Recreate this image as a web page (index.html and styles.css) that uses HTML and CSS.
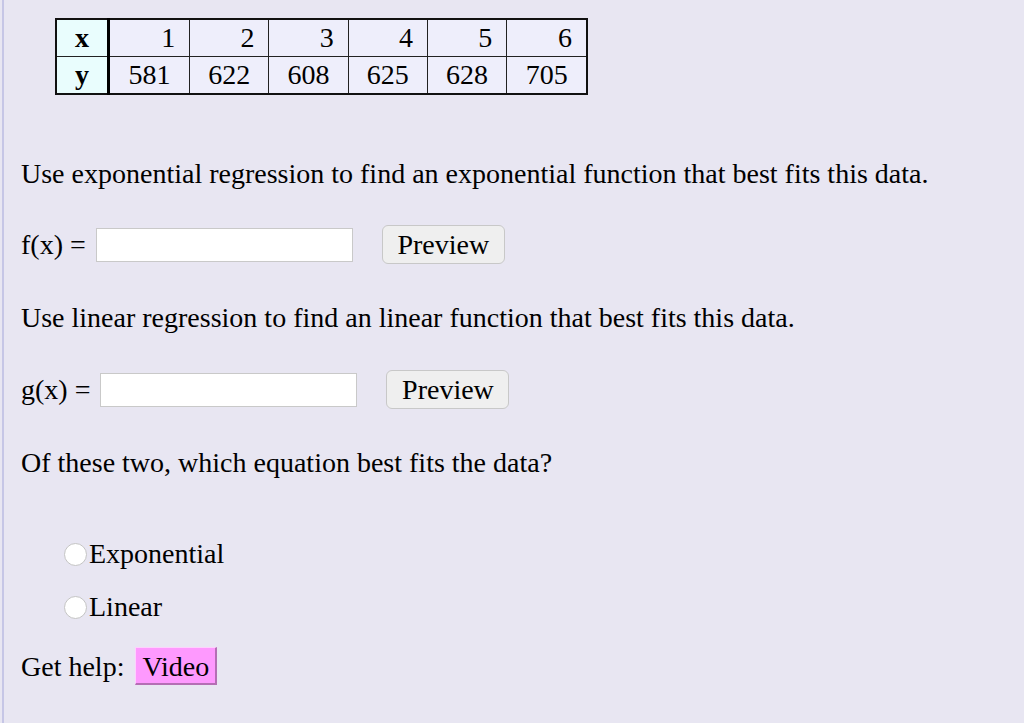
FILE: index.html
```html
<!DOCTYPE html>
<html>
<head>
<meta charset="utf-8">
<link rel="stylesheet" href="styles.css">
</head>
<body>
<div class="page">
  <table class="data">
    <tr>
      <th>x</th>
      <td class="r">1</td><td class="r">2</td><td class="r">3</td><td class="r">4</td><td class="r">5</td><td class="r">6</td>
    </tr>
    <tr>
      <th>y</th>
      <td>581</td><td>622</td><td>608</td><td>625</td><td>628</td><td>705</td>
    </tr>
  </table>

  <p class="q q1">Use exponential regression to find an exponential function that best fits this data.</p>
  <div class="answer a1">
    <span class="label">f(x) =</span><input class="box" type="text"><button class="preview">Preview</button>
  </div>

  <p class="q q2">Use linear regression to find an linear function that best fits this data.</p>
  <div class="answer a2">
    <span class="label">g(x) =</span><input class="box" type="text"><button class="preview">Preview</button>
  </div>

  <p class="q q3">Of these two, which equation best fits the data?</p>

  <div class="choices">
    <label class="choice c1"><input type="radio" name="fit" class="radio">Exponential</label>
    <label class="choice c2"><input type="radio" name="fit" class="radio">Linear</label>
  </div>

  <div class="help">
    <span>Get help:</span><span class="video">Video</span>
  </div>
</div>
</body>
</html>
```

FILE: styles.css
```css
html, body {
  margin: 0;
  padding: 0;
  background: #e8e6f2;
}

body {
  font-family: "Liberation Serif", "Times New Roman", serif;
  font-size: 28px;
  color: #000;
}

.page {
  margin-left: 2px;
  border-left: 2px solid #c6c6e6;
  padding-left: 17px;
  padding-top: 18px;
  min-height: 705px;
}

.data {
  margin-left: 34px;
  width: 533px;
  border-collapse: collapse;
  border: 2px solid #111;
}

.data th,
.data td {
  border: 1px solid #222;
  height: 36px;
  padding: 0;
  line-height: 30px;
}

.data th {
  width: 50px;
  background: #e9fdfd;
  font-weight: bold;
  text-align: center;
  border-right: 3px solid #000;
}

.data td {
  background: #eeeefb;
  text-align: center;
}

.data td.r {
  text-align: right;
  padding-right: 14px;
}

.q {
  margin: 0;
  line-height: 30px;
}

.q1 { margin-top: 64px; }
.q2 { margin-top: 39px; }
.q3 { margin-top: 39px; }

.answer {
  display: flex;
  align-items: center;
  height: 39px;
}

.a1 { margin-top: 36px; }
.a2 { margin-top: 37px; }

.label {
  margin-right: 10px;
}

.box {
  width: 257px;
  height: 34px;
  box-sizing: border-box;
  border: 1px solid #c9c9c9;
  background: #fff;
  margin: 0;
  padding: 0 4px;
  font: inherit;
}

.preview {
  margin-left: 29px;
  width: 123px;
  height: 39px;
  box-sizing: border-box;
  border: 1px solid #c8c8c8;
  border-radius: 6px;
  background: #efefef;
  font-family: "Liberation Serif", "Times New Roman", serif;
  font-size: 28px;
  color: #000;
  padding: 0;
}

.choices {
  margin-top: 61px;
  padding-left: 43px;
}

.choice {
  display: flex;
  align-items: center;
  height: 30px;
}

.c2 { margin-top: 23px; }

.radio {
  appearance: none;
  -webkit-appearance: none;
  width: 23px;
  height: 23px;
  margin: 0 2px 0 0;
  border: 1px solid #c4c4c4;
  border-radius: 50%;
  background: #fff;
  box-sizing: border-box;
}

.help {
  margin-top: 25px;
  display: flex;
  align-items: baseline;
}

.video {
  margin-left: 11px;
  background: #fe99fe;
  padding: 2px 6px 0;
  line-height: 33px;
  border-top: 1px solid #ffd0ff;
  border-left: 1px solid #ffd0ff;
  border-right: 2px solid #b46eb4;
  border-bottom: 2px solid #b46eb4;
}
```
